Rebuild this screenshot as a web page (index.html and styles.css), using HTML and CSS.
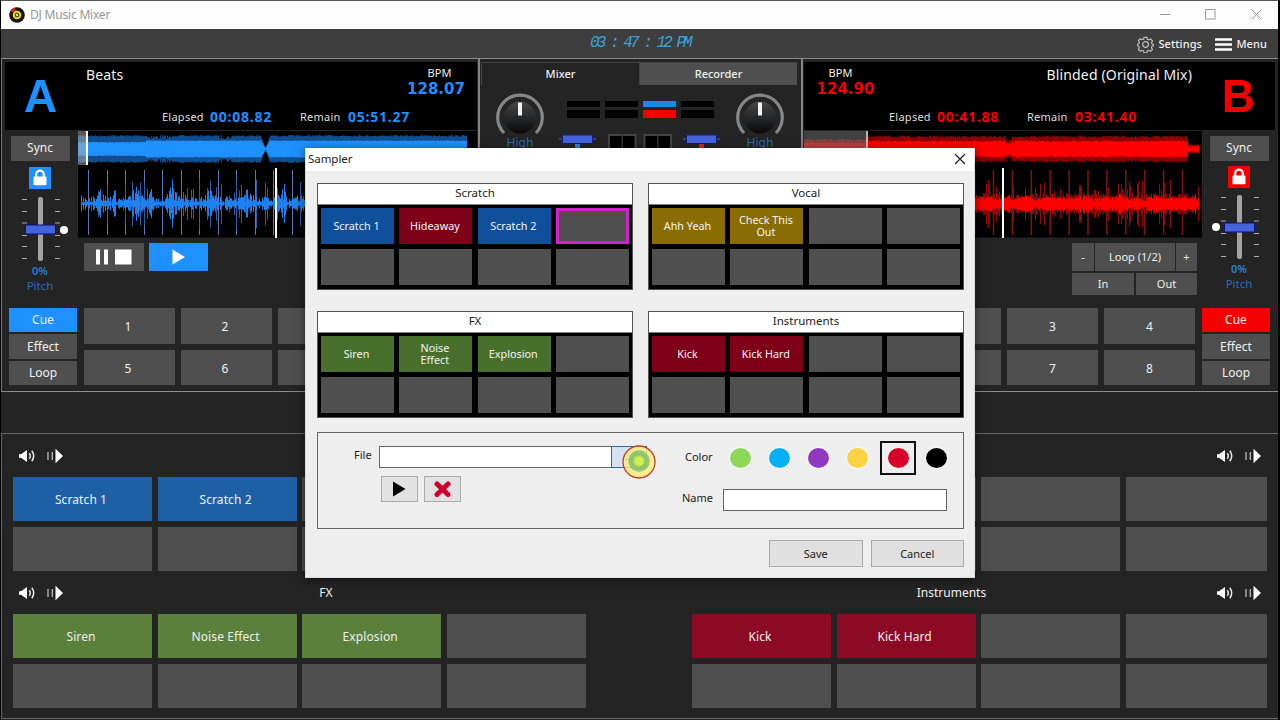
FILE: index.html
```html
<!DOCTYPE html>
<html lang="en">
<head>
<meta charset="utf-8">
<title>DJ Music Mixer</title>
<link rel="stylesheet" href="styles.css">
</head>
<body>
<svg class="defs" width="0" height="0">
  <defs>
    <linearGradient id="knob-face" x1="0" y1="0" x2="0" y2="1"><stop offset="0" stop-color="#454545"/><stop offset="0.45" stop-color="#2a2b2d"/><stop offset="1" stop-color="#08090b"/></linearGradient>
    <symbol id="speaker" viewBox="0 0 18 14"><path d="M1 5.2h2L9 1v12L3 8.800H1z" fill="#fff"/><path d="M11.300 4.300q2 2.700 0 5.400M13.800 1.800q3.800 5.200 0 10.400" fill="none" stroke="#e8e8e8" stroke-width="1.500"/></symbol>
    <symbol id="cueplay" viewBox="0 0 18 16"><path d="M2 4v8M6.300 4v8" stroke="#bbb" stroke-width="1.300"/><path d="M9.500 .8l7.500 7.200-7.500 7.200z" fill="#fff"/></symbol>
    <symbol id="lock" viewBox="0 0 22 22"><path d="M7.200 10V7.500a3.800 3.800 0 0 1 7.600 0V10" fill="none" stroke="#fff" stroke-width="2.200"/><rect x="4.500" y="9.500" width="13" height="8.800" rx="1" fill="#fff"/></symbol>
    <symbol id="knob" viewBox="0 0 50 44"><path d="M9 41A22.300 22.300 0 1 1 41 41" fill="none" stroke="#858789" stroke-width="3.200"/><circle cx="25" cy="25.500" r="16" fill="url(#knob-face)"/><rect x="23" y="10.500" width="4" height="13" fill="#f2f2f2"/></symbol>
    <symbol id="ticks" viewBox="0 0 38 60"><path d="M0 .5h5M0 12.500h5M0 24h5M0 36.500h5M0 47.500h5M0 59.500h5M33 .5h5M33 12.500h5M33 24h5M33 36.500h5M33 47.500h5M33 59.500h5" stroke="#aaa"/></symbol>
  </defs>
</svg>
<div class="window">
  <header class="titlebar">
    <svg class="app-icon" viewBox="0 0 16 16"><circle cx="8" cy="8" r="7.800" fill="#151515"/><path d="M8 8L1.500 4A7.600 7.600 0 0 1 6 .6z" fill="#c22"/><circle cx="8" cy="8" r="4.300" fill="#e8d816"/><circle cx="8" cy="8" r="2.300" fill="#333"/><circle cx="8" cy="8" r="1.200" fill="#f4ee60"/></svg>
    <span class="app-name">DJ Music Mixer</span>
    <svg class="caption" viewBox="0 0 110 14" fill="none" stroke="#999"><path d="M4 6.500h10"/><rect x="49.500" y="1.500" width="9.500" height="9.500"/><path d="M95.500 1.500l10 10M105.500 1.500l-10 10"/></svg>
  </header>
  <div class="toolbar">
    <span class="clock">03 : 47 : 12 PM</span>
    <svg class="gear" viewBox="0 0 18 18" fill="none" stroke="#c4c4c4" stroke-width="1.200"><path d="M7.500 1.500h3l.5 2 1.500.7 1.900-1 2 2-1 1.900.6 1.500 2 .5v1l-2 .6-.7 1.500 1 1.900-2 2-1.900-1-1.500.7-.5 2h-3l-.5-2-1.500-.7-1.900 1-2-2 1-1.900-.7-1.500-1.600-.5v-1.400l1.700-.5.6-1.500-1-1.900 2-2 1.900 1 1.600-.7z"/><circle cx="9" cy="9" r="3"/></svg>
    <span class="tool settings">Settings</span>
    <svg class="burger" viewBox="0 0 17 13"><path d="M0 1.500h17M0 6.500h17M0 11.500h17" stroke="#fff" stroke-width="2.600"/></svg>
    <span class="tool">Menu</span>
  </div>

  <main class="decks">
    <section class="deck deck-a">
      <div class="display">
        <div class="letter">A</div>
        <div class="info">
          <div class="track">Beats</div>
          <div class="bpm"><span>BPM</span><b>128.07</b></div>
          <div class="times"><span class="lbl">Elapsed</span><b>00:08.82</b><span class="lbl">Remain</span><b>05:51.27</b></div>
        </div>
      </div>
      <div class="deck-body">
        <div class="side">
          <div class="btn sync">Sync</div>
          <svg class="lock" viewBox="0 0 22 22"><use href="#lock"/></svg>
          <svg class="pitch-slider" viewBox="0 0 60 65"><use href="#ticks" x="12" y="2" width="38" height="60"/><rect x="28" y="0" width="5" height="64" rx="2" fill="#a3a3a3"/><rect x="15.500" y="28" width="30" height="9" fill="#4463dc" stroke="#0a1280"/><circle cx="54" cy="33" r="4" fill="#fff"/></svg>
          <span class="pct">0%</span><span class="pitch">Pitch</span>
          <div class="modes"><div class="btn on">Cue</div><div class="btn">Effect</div><div class="btn">Loop</div></div>
        </div>
        <div class="main">
          <div class="waves">
            <svg class="overview" id="overview-a" width="389" height="34"></svg>
            <svg class="detail" id="detail-a" width="389" height="70"></svg>
          </div>
          <div class="transport">
            <div class="btn"><svg width="60" height="28" viewBox="0 0 60 28"><path d="M12 6.500h4v15h-4zM20 6.500h4v15h-4zM31 6.500h16.500v15H31z" fill="#fff"/></svg></div>
            <div class="btn on"><svg width="59" height="28" viewBox="0 0 59 28"><path d="M23.500 6.500l12.500 7.500-12.500 7.500z" fill="#fff"/></svg></div>
          </div>
          <div class="cues"><div class="btn">1</div><div class="btn">2</div><div class="btn">3</div><div class="btn">4</div><div class="btn">5</div><div class="btn">6</div><div class="btn">7</div><div class="btn">8</div></div>
        </div>
      </div>
    </section>

    <section class="mixer">
      <div class="tabs"><div class="tab">Mixer</div><div class="tab idle">Recorder</div></div>
      <div class="eq">
        <div class="knob"><svg width="50" height="44"><use href="#knob"/></svg><span>High</span></div>
        <div class="meters">
          <div class="leds"><i></i><i></i><i class="blue"></i><i></i><i></i><i></i><i class="red"></i><i></i></div>
          <svg class="faders" width="162" height="16" viewBox="0 0 162 16"><path d="M0 5h37M124 5h37" stroke="#4463dc"/><rect x="3.500" y="1" width="30" height="8.500" fill="#4463dc" stroke="#16206c"/><path d="M16 10h5v6h-5z" fill="#2e86e8"/><rect x="127.500" y="1" width="30" height="8.500" fill="#4463dc" stroke="#16206c"/><path d="M140 10h5v6h-5z" fill="#d22"/><path d="M50 1h26.500v15H50zM85.500 1H112v15H85.500z" fill="#000" stroke="#444" stroke-width="2"/><path d="M63.300 1v15M98.800 1v15" stroke="#333" stroke-width="1.500"/></svg>
        </div>
        <div class="knob"><svg width="50" height="44"><use href="#knob"/></svg><span>High</span></div>
      </div>
    </section>

    <section class="deck deck-b">
      <div class="display">
        <div class="info">
          <div class="bpm"><span>BPM</span><b>124.90</b></div>
          <div class="track">Blinded (Original Mix)</div>
          <div class="times"><span class="lbl">Elapsed</span><b>00:41.88</b><span class="lbl">Remain</span><b>03:41.40</b></div>
        </div>
        <div class="letter">B</div>
      </div>
      <div class="deck-body">
        <div class="main">
          <div class="waves">
            <svg class="overview" id="overview-b" width="398" height="34"></svg>
            <svg class="detail" id="detail-b" width="398" height="70"></svg>
          </div>
          <div class="loops">
            <div class="loop-size"><div class="btn">-</div><div class="btn">Loop (1/2)</div><div class="btn">+</div></div>
            <div class="loop-io"><div class="btn">In</div><div class="btn">Out</div></div>
          </div>
          <div class="cues"><div class="btn">1</div><div class="btn">2</div><div class="btn">3</div><div class="btn">4</div><div class="btn">5</div><div class="btn">6</div><div class="btn">7</div><div class="btn">8</div></div>
        </div>
        <div class="side">
          <div class="btn sync">Sync</div>
          <svg class="lock" viewBox="0 0 22 22"><use href="#lock"/></svg>
          <svg class="pitch-slider" viewBox="0 0 60 65"><use href="#ticks" x="12" y="2" width="38" height="60"/><rect x="28" y="0" width="5" height="64" rx="2" fill="#a3a3a3"/><rect x="15.500" y="28" width="30" height="9" fill="#4463dc" stroke="#0a1280"/><circle cx="7" cy="32" r="4" fill="#fff"/></svg>
          <span class="pct">0%</span><span class="pitch">Pitch</span>
          <div class="modes"><div class="btn on">Cue</div><div class="btn">Effect</div><div class="btn">Loop</div></div>
        </div>
      </div>
    </section>
  </main>

  <section class="banks">
    <div class="bank">
      <div class="bank-head"><svg class="spk"><use href="#speaker"/></svg><svg class="cp"><use href="#cueplay"/></svg><span></span></div>
      <div class="pads"><div class="pad blue">Scratch 1</div><div class="pad blue">Scratch 2</div><div class="pad"></div><div class="pad"></div><div class="pad"></div><div class="pad"></div><div class="pad"></div><div class="pad"></div></div>
    </div>
    <div class="bank right">
      <div class="bank-head"><span></span><svg class="spk"><use href="#speaker"/></svg><svg class="cp"><use href="#cueplay"/></svg></div>
      <div class="pads"><div class="pad"></div><div class="pad"></div><div class="pad"></div><div class="pad"></div><div class="pad"></div><div class="pad"></div><div class="pad"></div><div class="pad"></div></div>
    </div>
    <div class="bank">
      <div class="bank-head"><svg class="spk"><use href="#speaker"/></svg><svg class="cp"><use href="#cueplay"/></svg><span>FX</span></div>
      <div class="pads"><div class="pad green">Siren</div><div class="pad green">Noise Effect</div><div class="pad green">Explosion</div><div class="pad"></div><div class="pad"></div><div class="pad"></div><div class="pad"></div><div class="pad"></div></div>
    </div>
    <div class="bank right">
      <div class="bank-head"><span>Instruments</span><svg class="spk"><use href="#speaker"/></svg><svg class="cp"><use href="#cueplay"/></svg></div>
      <div class="pads"><div class="pad red">Kick</div><div class="pad red">Kick Hard</div><div class="pad"></div><div class="pad"></div><div class="pad"></div><div class="pad"></div><div class="pad"></div><div class="pad"></div></div>
    </div>
  </section>

  <div class="dialog">
    <div class="dialog-title"><span>Sampler</span><svg width="12" height="12" viewBox="0 0 12 12"><path d="M1 1l10 10M11 1L1 11" stroke="#222" stroke-width="1.200"/></svg></div>
    <div class="groups">
      <div class="group"><h3>Scratch</h3><div class="slots"><div class="slot blue">Scratch 1</div><div class="slot red">Hideaway</div><div class="slot blue">Scratch 2</div><div class="slot selected"></div><div class="slot"></div><div class="slot"></div><div class="slot"></div><div class="slot"></div></div></div>
      <div class="group"><h3>Vocal</h3><div class="slots"><div class="slot gold">Ahh Yeah</div><div class="slot gold">Check This<br>Out</div><div class="slot"></div><div class="slot"></div><div class="slot"></div><div class="slot"></div><div class="slot"></div><div class="slot"></div></div></div>
      <div class="group"><h3>FX</h3><div class="slots"><div class="slot green">Siren</div><div class="slot green">Noise<br>Effect</div><div class="slot green">Explosion</div><div class="slot"></div><div class="slot"></div><div class="slot"></div><div class="slot"></div><div class="slot"></div></div></div>
      <div class="group"><h3>Instruments</h3><div class="slots"><div class="slot red">Kick</div><div class="slot red">Kick Hard</div><div class="slot"></div><div class="slot"></div><div class="slot"></div><div class="slot"></div><div class="slot"></div><div class="slot"></div></div></div>
    </div>
    <div class="form">
      <div class="file-part">
        <div class="file-row"><label>File</label><div class="field"></div><div class="browse">...
          <svg class="pointer" width="36" height="36" viewBox="0 0 36 36"><circle cx="18" cy="18" r="16" fill="#ffec78" fill-opacity=".78" stroke="#b8432c" stroke-width="1.300"/><circle cx="18" cy="17" r="8.500" fill="#a4d850" stroke="#86c070" stroke-width="4.500" stroke-opacity=".85"/><circle cx="18" cy="17" r="4.500" fill="#d4ee55"/></svg></div></div>
        <div class="file-actions">
          <div class="tool-btn"><svg width="14" height="16" viewBox="0 0 14 16"><path d="M0 .5L12.500 8 0 15.500z" fill="#000"/></svg></div>
          <div class="tool-btn"><svg width="18" height="17" viewBox="0 0 18 17"><path d="M3 3l11 10.500M14 3L3 13.500" stroke="#d4002c" stroke-width="5" stroke-linecap="round"/></svg></div>
        </div>
      </div>
      <div class="meta-part">
        <div class="color-row"><label>Color</label>
          <div class="swatch"><i class="c-green"></i></div><div class="swatch"><i class="c-blue"></i></div><div class="swatch"><i class="c-purple"></i></div><div class="swatch"><i class="c-yellow"></i></div><div class="swatch chosen"><i class="c-red"></i></div><div class="swatch"><i class="c-black"></i></div></div>
        <div class="name-row"><label>Name</label><div class="field"></div></div>
      </div>
    </div>
    <div class="dialog-actions"><div class="push">Save</div><div class="push">Cancel</div></div>
  </div>
</div>
<script src="waves.js"></script>
</body>
</html>
```

FILE: styles.css
```css
* { box-sizing: border-box; }
body { margin: 0; background: #000; color: #f0f0f0; font-family: "Noto Sans", "Open Sans", sans-serif; font-size: 12px; line-height: 16px; }
svg { display: block; flex: none; }
.defs { position: absolute; }
h3 { margin: 0; font-weight: 400; }
b { font-weight: 700; }
.window { position: relative; width: 1280px; height: 720px; overflow: hidden; background: #242424; border: solid #000; border-width: 0 2px 0 1px; display: flex; flex-direction: column; }

.titlebar { height: 29px; flex: none; background: #fefdfe; border-top: 1px solid #555; display: flex; align-items: center; padding: 0 12px 0 8px; }
.app-icon { width: 16px; height: 16px; }
.app-name { margin-left: 5px; color: #969696; font-size: 12px; letter-spacing: -.2px; flex: 1; }
.caption { width: 110px; height: 14px; }
.toolbar { height: 30px; flex: none; background: #3e3e3e; border-bottom: 1px solid #8b8b8b; display: flex; align-items: center; padding: 1px 11px 0 589px; }
.clock { flex: 1; margin-top: -3px; color: #3ba4d6; font: italic 16px/18px "Liberation Mono", monospace; letter-spacing: -2.950px; white-space: pre; }
.gear { width: 17px; height: 17px; }
.tool { font-size: 11px; letter-spacing: .1px; font-weight: 500; margin-left: 4px; }
.settings { width: 43px; margin-right: 14px; }
.burger { width: 17px; height: 13px; }

.decks { height: 333px; flex: none; display: grid; grid-template-columns: 476px 325px 1fr; border-bottom: 1px solid #8b8b8b; border-left: 1px solid #777; }
.deck { padding-top: 3px; }
.deck-a { --main: #1e90ff; }
.deck-b { --main: #f40000; }
.display { height: 68px; background: #000; display: flex; }
.deck-a .display { margin: 0 1px 0 3px; }
.deck-b .display { margin: 0 3px 0 1px; }
.letter { width: 73px; text-align: center; font: bold 46px/68px "Liberation Sans", sans-serif; color: var(--main); flex: none; }
.deck-a .letter { padding-right: 2px; }
.deck-b .letter { padding-right: 1px; }
.info { flex: 1; display: grid; grid-template-rows: 42px 26px; }
.deck-a .info { grid-template-columns: 1fr 72px; padding-left: 8px; }
.deck-b .info { grid-template-columns: 73px 1fr; padding-left: 5px; }
.track { font-size: 14px; letter-spacing: .15px; line-height: 20px; padding-top: 3px; }
.deck-b .track { text-align: right; padding-right: 10px; }
.bpm { display: flex; flex-direction: column; align-items: center; font-size: 11px; line-height: 14px; padding-top: 4px; }
.bpm b { font: bold 15px/19px "DejaVu Sans", sans-serif; color: var(--main); }
.deck-a .bpm span { padding-right: 3px; }
.deck-a .bpm b { margin-left: -10px; }
.deck-b .bpm span { padding-right: 10px; }
.times { grid-column: 1 / 3; display: flex; align-items: center; white-space: nowrap; }
.deck-a .times { padding-left: 76px; }
.deck-b .times { padding-left: 80px; }
.times .lbl { font-size: 11px; letter-spacing: .25px; width: 48px; color: #ddd; }
.times b { font-size: 14px; letter-spacing: .75px; color: var(--main); width: 90px; }

.deck-body { display: flex; height: 261px; }
.side { width: 76px; display: flex; flex-direction: column; align-items: center; flex: none; }
.deck-b .side { width: 74px; margin-right: 2px; }
.btn { background: #4f4f4f; color: #f0f0f0; display: flex; align-items: center; justify-content: center; }
.btn.on { background: var(--main); }
.sync { width: 59px; height: 25px; margin-top: 6px; padding-bottom: 1px; }
.lock { width: 22px; height: 22px; background: var(--main); margin-top: 6px; }
.pitch-slider { width: 60px; height: 65px; margin-top: 8px; }
.deck-b .lock { margin-top: 5px; }
.deck-b .pitch-slider { margin-top: 7px; }
.pct { color: #2a80d2; font-weight: 600; font-size: 11px; line-height: 14px; margin-top: 2px; }
.pitch { color: #2a6db4; font-size: 11.500px; line-height: 15px; }
.modes { width: 68px; display: grid; grid-template-rows: 24px 25px 24px; gap: 2px; margin-top: auto; margin-bottom: 6px; }
.deck-a .modes { margin-left: 6px; }
.deck-b .modes { margin-right: 6px; }
.main { flex: 1; min-width: 0; display: flex; flex-direction: column; padding-top: 1px; }
.waves { background: #000; height: 107px; border-bottom: 1px solid #111; flex: none; }
.deck-b .waves { margin-left: 1px; }
.deck-a .waves { margin-right: 1px; }
.detail { margin-top: 3px; }
.transport { display: flex; gap: 5px; margin: 5px 0 0 6px; }
.cues { display: grid; grid-template-columns: repeat(4, 91px); grid-template-rows: 36px 35px; gap: 6px; margin-top: auto; margin-bottom: 6px; }
.deck-a .cues { margin-left: 6px; }
.deck-b .cues { margin-left: 10px; }
.cues .btn { padding-top: 2px; }
.deck-a .cues .btn { padding-right: 3px; }
.loops { width: 125px; margin: 5px 5px 0 auto; display: grid; gap: 2px; font-size: 11px; }
.loop-size { display: grid; grid-template-columns: 22px 80px 21px; gap: 1px; height: 28px; }
.loop-io { display: grid; grid-template-columns: 62px 61px; gap: 2px; height: 22px; }

.mixer { border: solid #858585; border-width: 0 2px; padding: 3px 4px 0 1px; }
.tabs { display: grid; grid-template-columns: 1fr 1fr; height: 22px; font-size: 11px; font-weight: 500; text-align: center; line-height: 22px; }
.tab { border: solid #444; border-width: 1px 0 0 1px; }
.tab.idle { background: #4f4f4f; }
.eq { display: flex; padding: 8px 12px 0 14px; }
.knob { width: 50px; text-align: center; }
.knob span { display: block; color: #2a6db4; font-size: 12px; margin-top: -1px; }
.meters { flex: 1; display: flex; flex-direction: column; align-items: center; }
.leds { display: grid; grid-template-columns: repeat(4, 33px); grid-template-rows: 6px 8px; gap: 3px 5px; margin-top: 9px; }
.leds i { background: #000; }
.leds .blue { background: #1e86e8; }
.leds .red { background: #f40000; }
.faders { margin-top: 16px; }

.banks { margin-top: 41px; height: 286px; border: solid #666; border-width: 1px 0 1px 1px; display: grid; grid-template-columns: 573px 575px; grid-template-rows: 137px 137px; column-gap: 106px; padding: 5px 0 0 11px; }
.bank-head { height: 38px; display: flex; align-items: center; padding-bottom: 4px; }
.bank-head span { flex: 1; text-align: center; }
.spk { width: 18px; height: 14px; margin-left: 5px; }
.cp { width: 18px; height: 16px; margin-left: 10px; margin-right: 2px; }
.right .cp { margin-right: 5px; }
.pads { display: grid; grid-template-columns: repeat(4, 139px); grid-template-rows: 44px 44px; gap: 5.600px; }
.right .pads { grid-template-columns: repeat(3, 139px) 141px; }
.pad { background: #4f4f4f; display: flex; align-items: center; justify-content: center; letter-spacing: .1px; padding: 2px 3px 0 0; }
.pad.blue { background: #1e60a6; }
.pad.green { background: #5a803c; }
.pad.red { background: #8c0a24; }

.dialog { position: absolute; left: 304px; top: 148px; width: 670px; height: 430px; background: #eee; color: #222; font-size: 11px; display: flex; flex-direction: column; box-shadow: 0 2px 10px rgba(0,0,0,.5); border: 1px solid #ddd; border-width: 0 1px 1px; }
.dialog-title { height: 23px; background: #fff; display: flex; align-items: center; justify-content: space-between; padding: 0 8px 1px 2px; font-size: 11.500px; letter-spacing: -.05px; }
.groups { display: grid; grid-template-columns: 316px 316px; grid-template-rows: 107px 107px; gap: 21px 15px; margin: 12px 0 0 11px; }
.group { border: 1px solid #555; background: #000; }
.group h3 { height: 21px; background: #fff; text-align: center; font-size: 11.500px; line-height: 17px; border-bottom: 1px solid #777; }
.slots { display: grid; grid-template-columns: repeat(4, 73px); grid-template-rows: 36px 36px; gap: 5px 5.400px; padding: 3px; }
.slot { background: #4f4f4f; color: #f4f4f4; display: flex; align-items: center; justify-content: center; text-align: center; font-size: 10.800px; line-height: 12px; padding-right: 2px; }
.slot.blue { background: #10509a; }
.slot.red { background: #7e0018; }
.slot.green { background: #48702c; }
.slot.gold { background: #8a6c04; }
.slot.selected { border: 3px solid #d41fd0; }
.form { width: 647px; height: 97px; border: 1px solid #666; margin: 14px 0 0 11px; display: flex; }
.field { background: #fff; border: 1px solid #666; height: 22px; }
.file-part { width: 360px; padding: 13px 0 0 36px; }
.file-row { display: flex; }
.file-row label { width: 25px; line-height: 18px; }
.file-row .field { width: 233px; }
.browse { position: relative; width: 36px; height: 22px; margin-left: -1px; background: #d4e2f4; border: 1px solid #2c68b0; text-align: center; line-height: 18px; }
.pointer { position: absolute; left: 9px; top: -3px; }
.file-actions { display: flex; gap: 6px; margin: 8px 0 0 27px; }
.tool-btn { width: 37px; height: 26px; background: #e2e2e2; border: 1px solid #aaa; display: flex; align-items: center; justify-content: center; }
.meta-part { flex: 1; padding-top: 8px; }
.color-row { display: flex; align-items: center; height: 34px; }
.color-row label { width: 36px; margin-left: 7px; padding-bottom: 2px; }
.swatch { width: 39px; height: 34px; display: flex; align-items: center; justify-content: center; flex: none; }
.swatch.chosen { width: 36px; border: 2px solid #111; margin: 0 1px 0 3px; }
.swatch i { width: 21px; height: 20px; border-radius: 50%; box-shadow: 0 0 1px 1px #f8f8f8; }
.c-green { background: #8cd858; } .c-blue { background: #06b0f4; } .c-purple { background: #9038c0; } .c-yellow { background: #f8d444; } .c-red { background: #d80028; } .c-black { background: #000; }
.name-row { display: flex; margin-top: 14px; }
.name-row label { width: 41px; margin-left: 4px; line-height: 18px; }
.name-row .field { width: 224px; }
.dialog-actions { display: flex; justify-content: flex-end; gap: 8px; padding: 11px 10px 0 0; }
.push { width: 93.500px; height: 27px; background: #e0e0e0; border: 1px solid #aaa; text-align: center; line-height: 25px; }
```

FILE: waves.js
```js
const NS = "http://www.w3.org/2000/svg";
let seed = 7;
function rnd() { seed = (seed * 16807) % 2147483647; return seed / 2147483647; }

function draw(id, items) {
  const svg = document.getElementById(id);
  for (const [d, color, width] of items) {
    const p = document.createElementNS(NS, "path");
    p.setAttribute("d", d);
    p.setAttribute("stroke", color);
    p.setAttribute("stroke-width", width || 1);
    p.setAttribute("fill", "none");
    svg.appendChild(p);
  }
}

// One vertical stroke per pixel column, symmetric about mid.
function bars(from, to, mid, amp) {
  let d = "";
  for (let x = from; x < to; x++) {
    const a = amp(x);
    if (a > 0) d += `M${x + .5} ${(mid - a).toFixed(1)}V${(mid + a).toFixed(1)}`;
  }
  return d;
}

const pinch = (x) => Math.min(1, Math.abs(x - 187) / 5 + .08);
draw("overview-a", [
  [bars(0, 389, 18, x => (14 - rnd() * (x > 68 && x < 95 || x > 140 && x < 155 ? 4 : 1.5)) * pinch(x)), "#124e8e"],
  [bars(0, 389, 18, x => (x < 68 ? 6.5 : 8) * pinch(x) + rnd() * .6), "#1e90ff"],
  ["M4 0V34", "rgba(180,180,180,.5)", 8],
  ["M9 0V34", "#fff", 2]
]);

const level = (x) => x < 62 ? .75 : x > 383 ? .35 : x > 200 && x < 208 ? .7 : 1;
draw("overview-b", [
  [bars(0, 395, 18, x => (13.5 - rnd() * 2) * level(x)), "#8c0000"],
  [bars(0, 395, 18, x => (7 + rnd() * 1.6) * level(x)), "#ff0000"],
  ["M31 0V34", "rgba(130,130,130,.5)", 62],
  ["M63 0V34", "#eee", 1.5]
]);

const burst = (x) => {
  const p = ((x - 10) % 37 + 37) % 37;
  return Math.exp(-Math.abs(p - 10) / 4) * 20 + Math.exp(-Math.abs(p - 26) / 4) * 11;
};
let beatsA = "";
for (let x = 10.5; x < 389; x += 18.5) beatsA += `M${Math.floor(x) + .5} 2V67`;
draw("detail-a", [
  [beatsA, "#5a76b4"],
  [bars(3, 389, 36, x => (rnd() < .2 ? rnd() * 26 : 0)), "#2b5fae"],
  [bars(3, 389, 35.5, x => 1 + rnd() * (3 + burst(x))), "#1e80ee"],
  ["M198 0V70", "#fff", 2]
]);

let beatsB = "";
for (let x = 0.5; x < 393; x += 18.9) beatsB += `M${x.toFixed(1)} 2V67`;
draw("detail-b", [
  [beatsB, "#801414", 1.500],
  [bars(0, 395, 36, x => 5 + rnd() * (rnd() < .2 ? 20 : 6)), "#960808"],
  [bars(0, 395, 36, x => 2.5 + rnd() * 4.5 + burst(x) * .25 * rnd()), "#ff0000"],
  ["M199 0V70", "#fff", 2]
]);
```
